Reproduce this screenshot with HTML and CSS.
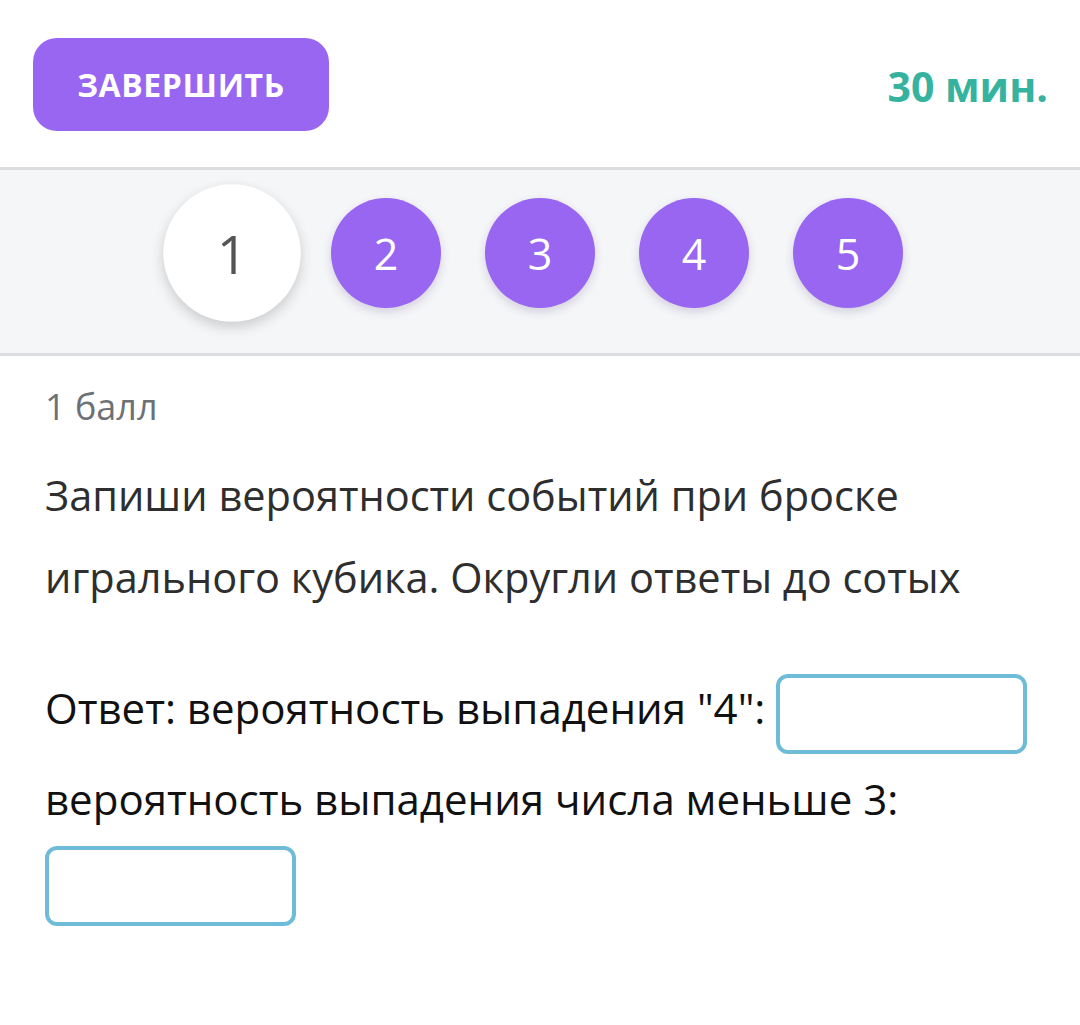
FILE: index.html
```html
<!DOCTYPE html>
<html lang="ru">
<head>
<meta charset="utf-8">
<title>Тест</title>
<link rel="stylesheet" href="styles.css">
</head>
<body>
<header class="topbar">
  <button class="finish-btn">ЗАВЕРШИТЬ</button>
  <div class="timer">30 мин.</div>
</header>
<nav class="steps">
  <div class="step step-active">1</div>
  <div class="step">2</div>
  <div class="step">3</div>
  <div class="step">4</div>
  <div class="step">5</div>
</nav>
<main class="content">
  <div class="score">1 балл</div>
  <p class="question">Запиши вероятности событий при броске игрального кубика. Округли ответы до сотых</p>
  <p class="answer">Ответ: вероятность выпадения "4": <span class="field"></span> вероятность выпадения числа меньше 3: <span class="field"></span></p>
</main>
</body>
</html>
```
FILE: styles.css
```css
* { box-sizing: border-box; }
html, body { margin: 0; padding: 0; background: #ffffff; }
body {
  font-family: "Open Sans", "Noto Sans", sans-serif;
  width: 1080px;
}
.topbar {
  display: flex;
  align-items: center;
  justify-content: space-between;
  padding: 38px 32px 36px 33px;
  border-bottom: 3px solid #dcdde0;
}
.finish-btn {
  width: 296px;
  height: 93px;
  border: none;
  border-radius: 24px;
  background: #9966f1;
  color: #ffffff;
  font-family: "Open Sans", sans-serif;
  font-weight: 700;
  font-size: 32px;
  letter-spacing: 0.6px;
  padding: 0;
}
.timer {
  color: #35b39e;
  font-weight: 700;
  font-size: 41px;
  line-height: 1;
  margin-top: 4px;
}
.steps {
  display: flex;
  justify-content: center;
  gap: 44px;
  padding: 28px 0 45px;
  background: #f5f6f8;
  border-bottom: 3px solid #dcdde0;
}
.step {
  width: 110px;
  height: 110px;
  border-radius: 50%;
  background: #9966f1;
  color: #ffffff;
  font-size: 43px;
  display: flex;
  align-items: center;
  justify-content: center;
  box-shadow: 0 4px 10px rgba(60, 40, 110, 0.18);
}
.step-active {
  background: #ffffff;
  color: #555555;
  transform: scale(1.25);
  box-shadow: 0 4px 10px rgba(0, 0, 0, 0.18);
}
.content {
  padding: 26px 45px 40px 45px;
}
.score {
  font-size: 36px;
  line-height: 50px;
  color: #6c7176;
}
.question {
  margin: 22px 0 0;
  font-size: 41.5px;
  line-height: 82px;
  color: #2e2e2e;
}
.answer {
  margin: 40px 0 0;
  font-size: 42px;
  line-height: 62px;
  color: #111111;
}
.field {
  display: inline-block;
  width: 251px;
  height: 80px;
  border: 4px solid #6fbcd9;
  border-radius: 12px;
  vertical-align: middle;
  margin: 16px 0 14px;
  background: #ffffff;
}
```
